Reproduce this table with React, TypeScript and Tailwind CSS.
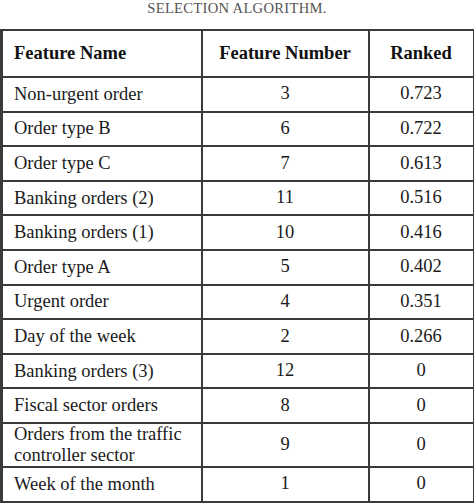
const rows: [string, string, string][] = [
  ["Non-urgent order", "3", "0.723"],
  ["Order type B", "6", "0.722"],
  ["Order type C", "7", "0.613"],
  ["Banking orders (2)", "11", "0.516"],
  ["Banking orders (1)", "10", "0.416"],
  ["Order type A", "5", "0.402"],
  ["Urgent order", "4", "0.351"],
  ["Day of the week", "2", "0.266"],
  ["Banking orders (3)", "12", "0"],
  ["Fiscal sector orders", "8", "0"],
  ["Orders from the traffic controller sector", "9", "0"],
  ["Week of the month", "1", "0"],
];

const App = () => {
  return (
    <div className="w-[474px] h-[503px] bg-white overflow-hidden font-['Liberation_Serif',serif]">
      <div className="h-[29px] text-center text-[14.6px] leading-[14px] pt-[1px] text-[#555] tracking-[0.3px]">
        SELECTION ALGORITHM.
      </div>
      <table className="w-[472px] table-fixed border-collapse border-l-[3px] border-[#3a3a3a]">
        <colgroup>
          <col className="w-[200px]" />
          <col className="w-[167px]" />
          <col className="w-[105px]" />
        </colgroup>
        <thead>
          <tr className="h-[47px]">
            <th className="border-2 border-[#3a3a3a] text-left pl-[11px] font-bold text-[18.5px] text-[#111]">
              Feature Name
            </th>
            <th className="border-2 border-[#3a3a3a] text-center font-bold text-[18.5px] text-[#111]">
              Feature Number
            </th>
            <th className="border-2 border-[#3a3a3a] text-center font-bold text-[18.5px] text-[#111]">
              Ranked
            </th>
          </tr>
        </thead>
        <tbody>
          {rows.map(([name, num, rank]) => {
            const tall = name.length > 25;
            return (
              <tr key={name} className={tall ? "h-[44px]" : "h-[34.6px]"}>
                <td className="border-2 border-[#3a3a3a] pl-[11px] pr-1 text-[18.5px] leading-[21px] text-[#1a1a1a]">
                  {tall ? (
                    <>
                      Orders from the traffic
                      <br />
                      controller sector
                    </>
                  ) : (
                    name
                  )}
                </td>
                <td className="border-2 border-[#3a3a3a] text-center text-[18.5px] text-[#1a1a1a]">
                  {num}
                </td>
                <td className="border-2 border-[#3a3a3a] text-center text-[18.5px] text-[#1a1a1a]">
                  {rank}
                </td>
              </tr>
            );
          })}
        </tbody>
      </table>
    </div>
  );
};

export default App;
